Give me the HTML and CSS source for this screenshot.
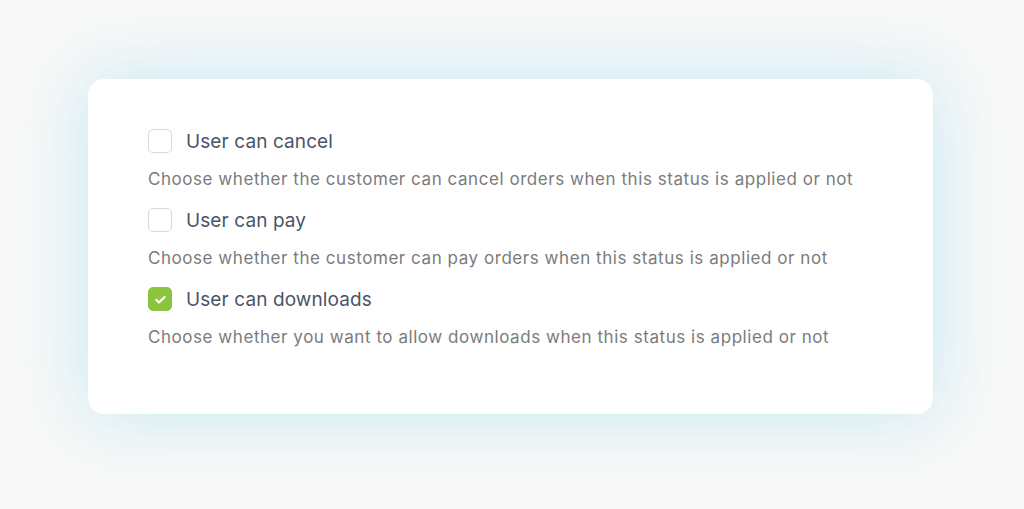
FILE: index.html
```html
<!DOCTYPE html>
<html>
<head>
<meta charset="utf-8">
<link rel="stylesheet" href="styles.css">
</head>
<body>
<div class="page">
  <div class="card">
    <div class="option">
      <label class="row"><span class="box"></span><span class="label">User can cancel</span></label>
      <p class="desc">Choose whether the customer can cancel orders when this status is applied or not</p>
    </div>
    <div class="option">
      <label class="row"><span class="box"></span><span class="label">User can pay</span></label>
      <p class="desc">Choose whether the customer can pay orders when this status is applied or not</p>
    </div>
    <div class="option">
      <label class="row"><span class="box checked"><svg viewBox="0 0 24 24" width="17" height="17"><path d="M6 12.5l3.8 3.8 8-8" fill="none" stroke="#fff" stroke-width="3" stroke-linecap="round" stroke-linejoin="round"/></svg></span><span class="label">User can downloads</span></label>
      <p class="desc">Choose whether you want to allow downloads when this status is applied or not</p>
    </div>
  </div>
</div>
</body>
</html>
```

FILE: styles.css
```css
html, body {
  margin: 0;
  padding: 0;
  background: #f8f8f8;
  height: 100%;
}
.page {
  padding: 79px 91px 95px 88px;
  font-family: Inter, "Noto Sans", sans-serif;
}
.card {
  width: 845px;
  height: 335px;
  box-sizing: border-box;
  background: #fff;
  border-radius: 16px;
  box-shadow: 0 0 70px rgba(160, 222, 242, 0.6);
  padding: 50px 60px 0 60px;
}
.option {
  display: flex;
  flex-direction: column;
}
.row {
  display: flex;
  align-items: center;
  gap: 14px;
  height: 24px;
}
.box {
  width: 24px;
  height: 24px;
  box-sizing: border-box;
  border: 1.5px solid #d3d9e2;
  border-radius: 5px;
  display: flex;
  align-items: center;
  justify-content: center;
  flex: none;
}
.box.checked {
  background: #8cc43f;
  border-color: #8cc43f;
}
.label {
  font-size: 19px;
  color: #4a5468;
  letter-spacing: 0.1px;
}
.desc {
  margin: 14px 0 17px;
  font-size: 17px;
  line-height: 24px;
  color: #7b7b7b;
  letter-spacing: 0.55px;
}
```
